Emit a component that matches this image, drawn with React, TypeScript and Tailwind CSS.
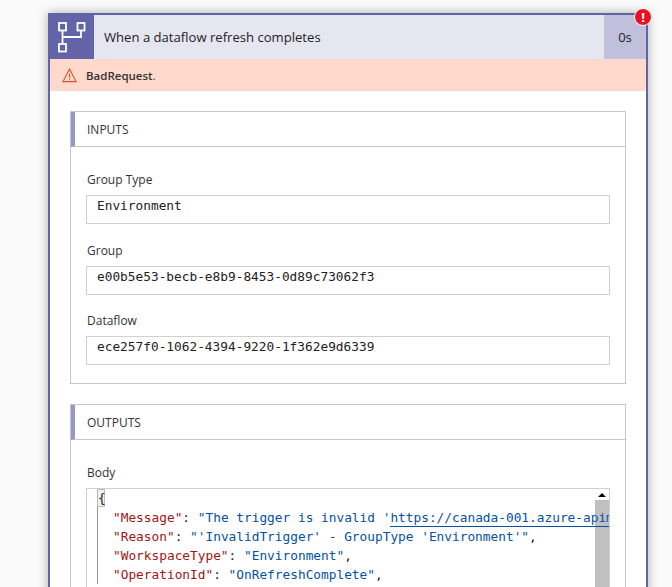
import { ReactNode } from "react";

const sans = "font-['Open_Sans','Noto_Sans',sans-serif]";
const mono = "font-['DejaVu_Sans_Mono',monospace]";

function FlowIcon() {
  return (
    <svg width="30" height="32" viewBox="0 0 30 32" fill="none" stroke="white" strokeWidth="1.8">
      <rect x="2" y="2" width="7" height="7.5" />
      <rect x="20.5" y="2" width="7" height="7.5" />
      <rect x="2" y="23" width="7" height="7.5" />
      <path d="M5.5 9.5V23M5.5 16h18.5V9.5" />
    </svg>
  );
}

function WarningIcon() {
  return (
    <svg width="15" height="15" viewBox="0 0 16 16" fill="none">
      <path d="M8 1.2 15 14.5H1z" stroke="#d9562d" strokeWidth="1.2" strokeLinejoin="miter" />
      <path d="M8 6v4.6M8 11.6v1.4" stroke="#d9562d" strokeWidth="1.2" />
    </svg>
  );
}

function Panel({ title, children, className }: { title: string; children: ReactNode; className?: string }) {
  return (
    <section className={`border border-[#c8c8c8] ${className ?? ""}`}>
      <div className="h-[35px] flex items-center border-b border-[#c8c8c8] border-l-4 border-l-[#9896c8] pl-3 pt-0.5 text-xs text-[#333]">
        {title}
      </div>
      {children}
    </section>
  );
}

function Field({ label, value, className }: { label: string; value: string; className?: string }) {
  return (
    <div className={className}>
      <div className="text-xs leading-4 text-[#333] mb-[7px] pl-px">{label}</div>
      <div className={`h-[29px] border border-[#d0d0d0] pl-2.5 pt-0.5 text-[12.8px] leading-4 text-[#222] ${mono}`}>{value}</div>
    </div>
  );
}

export default function App() {
  return (
    <div className={`h-[587px] overflow-hidden bg-[#fafafa] ${sans}`}>
      <div className="h-[13px]" />
      <div className="relative ml-12 w-[600px] h-[600px] border-2 border-[#6264a7] bg-white shadow-[0_0_10px_rgba(0,0,0,0.3)]">
        <div className="absolute -top-[7px] -right-[6px] w-[18px] h-[18px] rounded-full bg-[#e81123] border border-white flex items-center justify-center text-white text-[13px] font-bold leading-none">
          !
        </div>

        <header className="flex h-11 bg-[#e6e6f0]">
          <div className="w-11 bg-[#6264a7] flex items-center justify-center">
            <FlowIcon />
          </div>
          <div className="flex-1 pl-2.5 pt-0.5 flex items-center text-[13.1px] text-[#222]">When a dataflow refresh completes</div>
          <div className="w-[42px] bg-[#c0c0dc] pt-0.5 flex items-center justify-center text-[13px] text-[#222]">0s</div>
        </header>

        <div className="h-8 bg-[#fed9cc] flex items-center pl-3 gap-[9px]">
          <WarningIcon />
          <span className="text-[11.5px] text-[#333] pt-0.5">
            <span className="font-semibold">BadRequest</span>.
          </span>
        </div>

        <div className="px-5 pt-5">
          <Panel title="INPUTS" className="h-[273px]">
            <div className="px-[15px] pt-[25px]">
              <Field label="Group Type" value="Environment" className="mb-[19px]" />
              <Field label="Group" value="e00b5e53-becb-e8b9-8453-0d89c73062f3" className="mb-[18px]" />
              <Field label="Dataflow" value="ece257f0-1062-4394-9220-1f362e9d6339" />
            </div>
          </Panel>

          <Panel title="OUTPUTS" className="mt-5 h-[300px]">
            <div className="px-[15px] pt-[25px]">
              <div className="text-xs leading-4 text-[#333] mb-[7px] pl-px">Body</div>
              <div className={`relative h-[200px] border border-[#d0d0d0] overflow-hidden text-[12.8px] leading-[19px] whitespace-pre ${mono}`}>
                <div className="absolute top-0 right-0 bottom-0 w-[14px] bg-white flex flex-col">
                  <div className="h-[11px] flex items-center justify-center bg-white">
                    <div className="w-0 h-0 border-x-4 border-x-transparent border-b-4 border-b-black" />
                  </div>
                  <div className="flex-1 bg-[#c0c0c0]" />
                </div>
                <div className="relative pl-[10px] text-[#222]">
                  <div className="border-l border-[#999]">
                    <div className="-ml-px w-[8px] h-[18px] mb-px bg-[#eef0ea] border border-[#bbb] leading-[16px]">{"{"}</div>
                    <div className="pl-[15px]">
                      <span className="text-[#a31515]">"Message"</span>: <span className="text-[#0451a5]">"The trigger is invalid '<span className="border-b-[1.5px] border-[#0451a5] pb-px">https://canada-001.azure-apim.net/apim</span></span>
                    </div>
                    <div className="pl-[15px]">
                      <span className="text-[#a31515]">"Reason"</span>: <span className="text-[#0451a5]">"'InvalidTrigger' - GroupType 'Environment'"</span>,
                    </div>
                    <div className="pl-[15px]">
                      <span className="text-[#a31515]">"WorkspaceType"</span>: <span className="text-[#0451a5]">"Environment"</span>,
                    </div>
                    <div className="pl-[15px]">
                      <span className="text-[#a31515]">"OperationId"</span>: <span className="text-[#0451a5]">"OnRefreshComplete"</span>,
                    </div>
                  </div>
                </div>
              </div>
            </div>
          </Panel>
        </div>
      </div>
    </div>
  );
}
